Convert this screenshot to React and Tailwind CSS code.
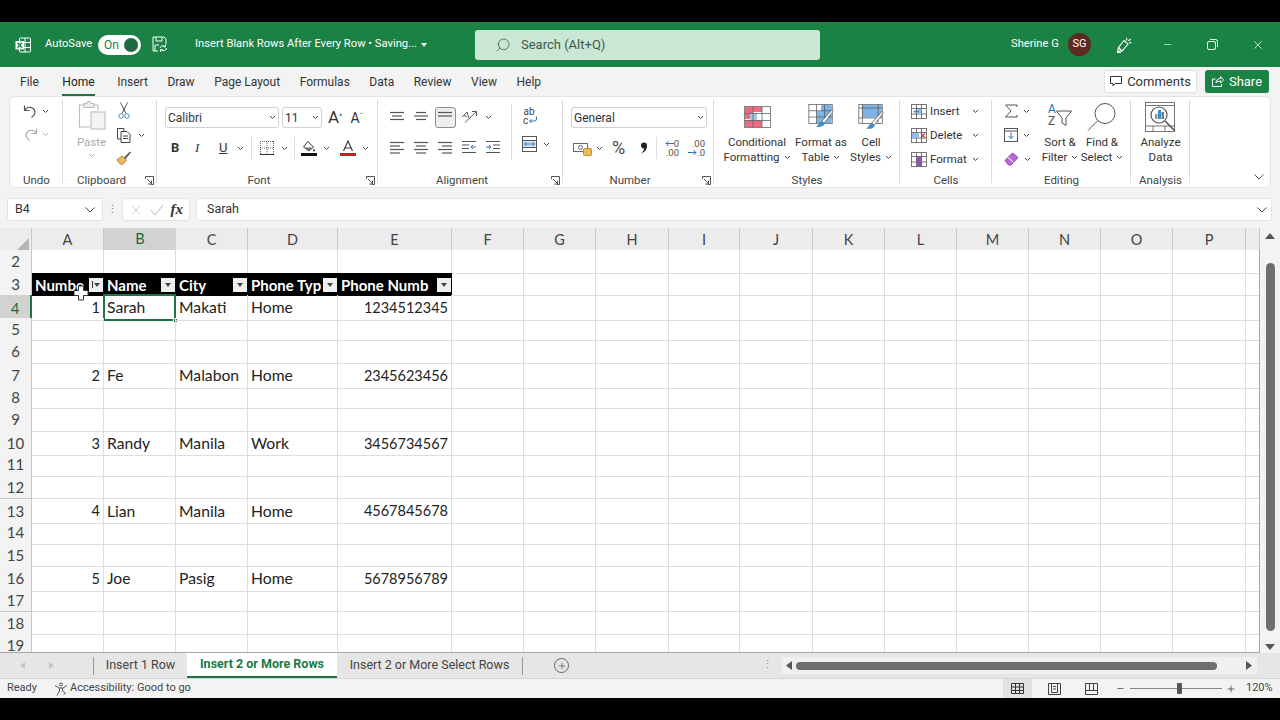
import React from "react";
import { Search, X, Minus, Plus } from "lucide-react";

const cols = ["A", "B", "C", "D", "E", "F", "G", "H", "I", "J", "K", "L", "M", "N", "O", "P", ""];
const gridCols =
  "grid grid-cols-[32px_72px_72px_72px_90px_114px_72px_72px_73px_71px_73px_72px_72px_72px_72px_72px_73px_14px]";

const table = {
  3: ["Numbe", "Name", "City", "Phone Typ", "Phone Numb"],
  4: ["1", "Sarah", "Makati", "Home", "1234512345"],
  7: ["2", "Fe", "Malabon", "Home", "2345623456"],
  10: ["3", "Randy", "Manila", "Work", "3456734567"],
  13: ["4", "Lian", "Manila", "Home", "4567845678"],
  16: ["5", "Joe", "Pasig", "Home", "5678956789"],
};
const rows = [2, 3, 4, 5, 6, 7, 8, 9, 10, 11, 12, 13, 14, 15, 16, 17, 18, 19];

function Chev({ className = "" }) {
  return (
    <svg width="7" height="5" viewBox="0 0 7 5" fill="none" stroke="#444" strokeWidth="1" className={className}>
      <path d="M1 1l2.5 2.5L6 1" />
    </svg>
  );
}

function Launcher() {
  return (
    <svg width="9" height="9" viewBox="0 0 9 9" fill="none" stroke="#555" strokeWidth="1">
      <path d="M.5 3V.5h8v8H6M2 3l4.5 4.5M3 8h3.5V4.500" />
    </svg>
  );
}

function Lines({ w = [14, 14, 14], stroke = "#555", right = false, center = false }) {
  return (
    <svg width="16" height="14" viewBox="0 0 16 14" stroke={stroke} strokeWidth="1.2">
      {w.map((l, i) => {
        const x = right ? 15 - l : center ? 8 - l / 2 : 1;
        return <path key={i} d={`M${x} ${2.500 + i * 3.500}h${l}`} />;
      })}
    </svg>
  );
}

function ExcelIcon() {
  return (
    <svg width="16" height="16" viewBox="0 0 16 16" fill="none">
      <rect x="4.500" y="1" width="11" height="14" rx="1" stroke="#fff" />
      <path d="M10 1v14M4.500 5.500h11M4.500 10.500h11" stroke="#fff" />
      <rect x="0.500" y="4" width="8.500" height="8.500" fill="#fff" />
      <path d="M2.500 5.800l4.400 5M6.900 5.800l-4.400 5" stroke="#1a8245" strokeWidth="1.300" />
    </svg>
  );
}

function SaveSync() {
  return (
    <svg width="16" height="17" viewBox="0 0 16 17" fill="none" stroke="#fff" strokeWidth="1">
      <path d="M6 15H1V1h11l2 2v5M4 1v4h6V1M3 15V9h4" />
      <path d="M8 12a3 3 0 015-1.500M14.500 12a3 3 0 01-5 2M13.500 8.500v2.300h-2.300M8.500 16v-2.300h2.300" />
    </svg>
  );
}

function PenSpark() {
  return (
    <svg width="16" height="16" viewBox="0 0 16 16" fill="none" stroke="#fff" strokeWidth="1.100">
      <path d="M1.500 14.500l1-4L8 3.500l4 3.500-5.500 6.500z" />
      <path d="M2.500 10.500l4 4M1 15.500h4" />
      <path d="M11 1l-.5 2.500M14.500 2L12.500 4M15.500 5.500L13 6" />
    </svg>
  );
}

function ScissorsIcon() {
  return (
    <svg width="12" height="18" viewBox="0 0 12 18" fill="none" stroke="#444" strokeWidth=".9">
      <path d="M2.500 .5L8 11.500M9.500 .5L4 11.500" />
      <circle cx="3" cy="14" r="2.300" stroke="#3f7fb8" />
      <circle cx="9" cy="14" r="2.300" stroke="#3f7fb8" />
    </svg>
  );
}

function UndoIcon({ flip, color = "#555" }) {
  return (
    <svg width="15" height="15" viewBox="0 0 15 15" fill="none" stroke={color} strokeWidth="1.200" className={flip ? "-scale-x-100" : ""}>
      <path d="M1.500 1.500v5h5M1.500 6.500C3 4 5 3 7.500 3.300c3.500.5 5.500 4 4 7-.6 1.300-1.600 2.300-3 3.200" />
    </svg>
  );
}

function PasteIcon() {
  return (
    <svg width="28" height="31" viewBox="0 0 28 31" fill="none" stroke="#bdbdbd" strokeWidth="1.100">
      <path d="M6 4H1.500v22H12M20 9V4h-4.500" />
      <path d="M6 2.500h3a2 2 0 014 0h3v4H6z" fill="#eee" />
      <rect x="13" y="11" width="14" height="17" fill="#f4f4f4" />
    </svg>
  );
}

function CopyIcon() {
  return (
    <svg width="16" height="16" viewBox="0 0 16 16" fill="none" stroke="#444" strokeWidth="1">
      <path d="M5 12H1.500V1.500H8V4" />
      <path d="M5 4.500h6l3 3v8H5zM7 9h5M7 11.500h5" />
    </svg>
  );
}

function BrushIcon() {
  return (
    <svg width="16" height="15" viewBox="0 0 16 15" fill="none">
      <path d="M1 9.500L6.500 6l4 4.500-4 4c-2.500-.2-4.500-2-5.500-5z" fill="#efb75e" stroke="#8a6a2a" strokeWidth=".7" />
      <path d="M8 7.500L14 1.500l1 1-5.500 6.500z" fill="#555" />
    </svg>
  );
}

function FillIcon() {
  return (
    <svg width="16" height="16" viewBox="0 0 16 16" fill="none">
      <path d="M7 1.500l5.500 5.500-4.500 4L2.500 7z" stroke="#333" strokeWidth="1" />
      <path d="M3 7.500h9l-4 3.500z" fill="#777" />
      <path d="M13 8.500l1 2a1 1 0 01-2 0z" fill="#333" />
      <rect x="0" y="13" width="16" height="3" fill="#111" />
    </svg>
  );
}

function FontColorIcon() {
  return (
    <svg width="16" height="16" viewBox="0 0 16 16" fill="none">
      <path d="M3.500 11L8 1l4.500 10M5 8h6" stroke="#333" strokeWidth="1.100" />
      <rect x="0" y="13" width="16" height="3" fill="#c81a24" />
    </svg>
  );
}

function BorderIcon() {
  return (
    <svg width="16" height="16" viewBox="0 0 16 16" fill="none" stroke="#666" strokeDasharray="1 1">
      <path d="M1 1.500h14M1 8h14M8 1v14M1.500 1v14M14.500 1v14" />
      <path d="M1 14.500h14" strokeDasharray="none" stroke="#333" />
    </svg>
  );
}

function OrientIcon() {
  return (
    <svg width="17" height="16" viewBox="0 0 17 16" fill="none" stroke="#555" strokeWidth="1">
      <path d="M1 8l5-5 2 6M2.500 6.500l3.500 1M4 13.500L15 3M11 2.500h4.500V7" stroke="#5a5a5a" />
    </svg>
  );
}

function IndentIcon({ flip }) {
  return (
    <svg width="16" height="14" viewBox="0 0 16 14" fill="none" stroke="#555" className={flip ? "-scale-x-100" : ""}>
      <path d="M1 1.500h14M8 5h7M8 8.500h7M1 12.500h14" />
      <path d="M1 7h5M4 5l2 2-2 2" stroke="#2f72b8" />
    </svg>
  );
}

function WrapIcon() {
  return (
    <svg width="16" height="19" viewBox="0 0 16 19" fill="none">
      <text x="1.500" y="8.500" fontSize="10" fill="#444" fontFamily="Roboto, sans-serif">ab</text>
      <text x="1" y="17.500" fontSize="10" fill="#444" fontFamily="Roboto, sans-serif">c</text>
      <path d="M14.500 10.500v2.500a2 2 0 01-2 2H7.500M9.500 13L7.500 15l2 2" stroke="#2f72b8" />
    </svg>
  );
}

function MergeIcon() {
  return (
    <svg width="15" height="16" viewBox="0 0 15 16" fill="none" stroke="#555">
      <rect x=".5" y=".5" width="14" height="15" />
      <path d="M.5 4.500h14M.5 11.500h14" />
      <rect x="1" y="5" width="13" height="6" fill="#cfe3f5" stroke="none" />
      <path d="M2.500 8h10M4.500 6l-2 2 2 2M10.500 6l2 2-2 2" stroke="#2f72b8" />
    </svg>
  );
}

function AccountingIcon() {
  return (
    <svg width="19" height="15" viewBox="0 0 19 15" fill="none" stroke="#666">
      <rect x=".5" y="2.500" width="14" height="8" />
      <circle cx="7.500" cy="6.500" r="2" />
      <rect x="10.500" y="7.500" width="8" height="7" rx="1" fill="#f0b95a" stroke="#c48a2c" />
    </svg>
  );
}

function CommaIcon() {
  return (
    <svg width="8" height="12" viewBox="0 0 8 12" fill="#222">
      <circle cx="4" cy="3.500" r="3" />
      <path d="M6.900 3.500C7.300 7 5 10 1.500 11.500 3.500 9 4 7.500 4 6z" />
    </svg>
  );
}

function DecimalIcon({ inc }) {
  const arrow = (
    <svg width="9" height="7" viewBox="0 0 9 7" fill="none" stroke="#2f72b8" className={inc ? "" : "-scale-x-100"}>
      <path d="M9 3.500H1M3.500 1L1 3.500 3.500 6" />
    </svg>
  );
  return (
    <div className="flex flex-col items-end w-[18px] text-[9.500px] leading-[9px] text-[#555]">
      {inc ? (
        <>
          <span className="flex items-center">{arrow}0</span>
          <span>.00</span>
        </>
      ) : (
        <>
          <span>.00</span>
          <span className="flex items-center">{arrow}.0</span>
        </>
      )}
    </div>
  );
}

function CondFormatIcon() {
  return (
    <svg width="27" height="22" viewBox="0 0 27 22" fill="none" stroke="#666" strokeWidth=".8">
      <rect x=".5" y=".5" width="26" height="21" fill="#fff" />
      <path d="M1 1h8v6H1zM9 1h9v5H9zM1 7h5v6H1zM1 14h17v7H1z" fill="#ec6d80" stroke="none" />
      <path d="M6 7h7v7H6z" fill="#a7c7e5" stroke="none" />
      <path d="M.5 7.500h26M.5 14.500h26M9 .5v21M18 .5v21" />
    </svg>
  );
}

function TableBrush() {
  return (
    <svg width="28" height="27" viewBox="0 0 28 30" fill="none" stroke="#555" strokeWidth=".8">
      <rect x=".5" y=".5" width="26" height="21" fill="#fff" />
      <path d="M14 1h12v7H14zM9 8h17v13H9z" fill="#7db4e6" stroke="none" />
      <path d="M.5 7.500h26M.5 14.500h26M9 .5v21M18 .5v21" />
      <path d="M26.500 6L15 19l2.500 2.500L27.500 8z" fill="#fff" />
      <path d="M15 19c-3 .5-3 4-6.500 6.500 5 .5 9-.5 9.500-4z" fill="#3f8fc9" stroke="none" />
    </svg>
  );
}

function CellStylesIcon() {
  return (
    <svg width="28" height="27" viewBox="0 0 28 30" fill="none" stroke="#555" strokeWidth=".8">
      <rect x=".5" y=".5" width="26" height="21" fill="#fff" />
      <path d="M4 1h22v14H4z" fill="#7db4e6" stroke="none" />
      <path d="M.5 4.500h26M.5 15.500h26M4.500 .5v21M22 .5v21" />
      <path d="M26.500 8L15 21l2.500 2.500L27.500 10z" fill="#fff" />
      <path d="M15 21c-3 .5-3 4-6.500 6.500 5 .5 9-.5 9.500-4z" fill="#3f8fc9" stroke="none" />
    </svg>
  );
}

function CellOpIcon({ kind }) {
  return (
    <svg width="16" height="15" viewBox="0 0 16 15" fill="none" stroke="#555" strokeWidth=".8">
      <rect x=".5" y=".5" width="15" height="14" fill="#fff" />
      <path d="M.5 4.500h15M.5 10h15M5.500 .5v14M10.500 .5v14" />
      {kind === "insert" && <path d="M6 5h4.500v5H6z" fill="#8fc1ea" stroke="none" />}
      {kind === "insert" && <path d="M8 7.500h-5M4.500 6l-1.500 1.500 1.500 1.500" stroke="#2f72b8" />}
      {kind === "delete" && <path d="M1 5h7v5H1z" fill="#8fc1ea" stroke="none" />}
      {kind === "delete" && <path d="M10 5l4 5M14 5l-4 5" stroke="#c8323c" strokeWidth="1.200" />}
      {kind === "format" && <path d="M5.500 5h5v9h-5z" fill="#8a5ab0" stroke="none" />}
    </svg>
  );
}

function SumFill({ kind }) {
  if (kind === "sum")
    return (
      <svg width="14" height="14" viewBox="0 0 14 14" fill="none" stroke="#555" strokeWidth="1">
        <path d="M13 3V1H1.500l5.500 6-5.500 6H13v-2" />
      </svg>
    );
  if (kind === "fill")
    return (
      <svg width="14" height="14" viewBox="0 0 14 14" fill="none" stroke="#555" strokeWidth="1">
        <rect x=".5" y=".5" width="13" height="13" />
        <path d="M.5 3h13" />
        <path d="M7 4.500v6M4.500 8L7 10.500 9.500 8" stroke="#2f72b8" />
      </svg>
    );
  return (
    <svg width="15" height="14" viewBox="0 0 15 14" fill="none">
      <path d="M1 8.500L8.500 1l5.500 4.500L7 13H4.500z" fill="#b56ad0" stroke="#9240b5" />
      <path d="M4 5.500l5.500 5" stroke="#fff" />
    </svg>
  );
}

function SortIcon() {
  return (
    <div className="flex items-center h-[30px]">
      <div className="flex flex-col text-[12px] leading-[12px] -mt-1">
        <span className="text-[#2f72b8]">A</span>
        <span className="text-[#555]">Z</span>
      </div>
      <svg width="16" height="16" viewBox="0 0 16 16" fill="none" stroke="#555" className="mt-0.5">
        <path d="M.5 1h15L10 8v7.500L6 13V8z" />
      </svg>
    </div>
  );
}

function FindIcon() {
  return (
    <svg width="30" height="30" viewBox="0 0 30 30" fill="none" stroke="#555" strokeWidth="1">
      <circle cx="18" cy="11.500" r="10" />
      <path d="M11 18.500L1 28.500" />
    </svg>
  );
}

function AnalyzeIcon() {
  return (
    <svg width="32" height="31" viewBox="0 0 32 31" fill="none" stroke="#555" strokeWidth=".8">
      <rect x=".5" y=".5" width="29" height="29" fill="#fff" />
      <path d="M.5 3.500h29M.5 24h29M8 24v6M20 24v6" />
      <circle cx="14" cy="13" r="8" strokeWidth="1.200" />
      <path d="M20 19l10 10" strokeWidth="1.600" />
      <path d="M10 12h2.500v5H10z" fill="#999" stroke="none" />
      <path d="M13 8h3v9h-3z" fill="#3f8fc9" stroke="none" />
      <path d="M16.500 10H19v7h-2.500z" fill="#777" stroke="none" />
    </svg>
  );
}

function BigButton({ icon, line1, line2, w }) {
  return (
    <div className={`flex flex-col items-center text-[11.500px] leading-[15px] text-[#333] whitespace-nowrap ${w}`}>
      <div className="h-[30px] flex items-center justify-center mb-[3px]">{icon}</div>
      <span>{line1}</span>
      <span className="flex items-center gap-1">
        {line2}
        <Chev />
      </span>
    </div>
  );
}

function Group({ width, label, launcher, children }) {
  return (
    <div className={`relative flex flex-col h-[87px] mt-[4px] ${width}`}>
      <div className="flex-1 min-h-0">{children}</div>
      <div className={`flex items-center justify-center h-[16px] pt-[1px] text-[11.500px] text-[#444] ${launcher ? "pr-[17px]" : ""}`}>
        {label}
      </div>
      <span className="absolute right-0 -top-[1px] h-[83px] w-px bg-[#dcdcdc]" />
      {launcher && (
        <span className="absolute right-[3px] bottom-[3px]">
          <Launcher />
        </span>
      )}
    </div>
  );
}

function ColumnHeaders() {
  return (
    <div className={`${gridCols} h-[22px] mt-[7px] bg-[#ececec] font-['Lato',sans-serif]`}>
      <div className="flex items-end justify-end pr-[2px] pb-[2px] border-r border-b border-[#c8c8c8]">
        <svg width="13" height="13" viewBox="0 0 13 13"><path d="M13 0v13H0z" fill="#b4b4b4" /></svg>
      </div>
      {cols.map((c, i) => (
        <div
          key={i}
          className={
            c === "B"
              ? "flex items-center justify-center pb-[2px] text-[14.500px] bg-[#d2d2d2] text-[#1d6b3d] border-b-2 border-[#217346]"
              : "flex items-center justify-center pb-[2px] text-[14.500px] text-[#444] border-r border-b border-[#c8c8c8]"
          }
        >
          {c}
        </div>
      ))}
    </div>
  );
}

function FilterBtn({ sorted }) {
  return (
    <span className="absolute right-[1px] top-[5px] w-[14px] h-[14px] bg-[#efefef] flex items-center justify-center">
      {sorted && <span className="w-px h-[7px] bg-[#333] mr-[1px]" />}
      <svg width="6" height="4" viewBox="0 0 6 4"><path d="M0 0h6L3 4z" fill="#444" /></svg>
    </span>
  );
}

function SheetRow({ n }) {
  const data = table[n];
  const isHeader = n === 3;
  const isActive = n === 4;
  return (
    <div className={`${gridCols} h-[22.6px]`}>
      <div
        className={
          isActive
            ? "flex items-center justify-center text-[15px] text-[#1d6b3d] bg-[#d2d2d2] border-r-2 border-[#217346]"
            : "flex items-center justify-center text-[15px] text-[#444] bg-[#f3f3f3] border-r border-b border-[#c8c8c8]"
        }
      >
        {n}
      </div>
      {cols.map((c, i) => {
        const val = data && data[i];
        const isNum = i === 0 || i === 4;
        if (isHeader && i < 5) {
          return (
            <div key={i} className="relative bg-black text-white font-bold text-[15px] pl-[3px] pt-[1px] flex items-center overflow-hidden whitespace-nowrap">
              {val}
              <FilterBtn sorted={i === 0} />
            </div>
          );
        }
        return (
          <div
            key={i}
            className={`relative flex items-center text-[#222] border-r border-b border-[#dedede] px-[3px] pt-[1px] ${
              isNum ? "justify-end text-[14.500px]" : "text-[15.700px]"
            }`}
          >
            {val}
            {isActive && i === 1 && (
              <>
                <span className="absolute -left-[1px] -top-[1px] -right-[1px] -bottom-[1px] border-2 border-[#217346]" />
                <span className="absolute -right-[3px] -bottom-[3px] w-[5px] h-[5px] bg-[#217346] border border-white" />
              </>
            )}
          </div>
        );
      })}
    </div>
  );
}

export default function App() {
  return (
    <div className="w-[1280px] h-[720px] overflow-hidden flex flex-col bg-black font-['Roboto',sans-serif]">
      <div className="h-[22px] shrink-0" />

      {/* title bar */}
      <div className="h-[45px] shrink-0 bg-[#1a8245] flex items-center text-white text-[11.200px]">
        <div className="ml-[15px]"><ExcelIcon /></div>
        <span className="ml-[14px] w-[53px]">AutoSave</span>
        <div className="w-[43px] h-[20px] rounded-full bg-white flex items-center justify-between pl-[6px] pr-[3px] text-[#1a8245] text-[12px]">
          On
          <span className="w-[14px] h-[14px] rounded-full bg-[#1a6b3d]" />
        </div>
        <div className="ml-[11px]"><SaveSync /></div>
        <span className="ml-[27px] w-[226px] whitespace-nowrap">Insert Blank Rows After Every Row • Saving...</span>
        <svg width="6" height="4" viewBox="0 0 6 4"><path d="M0 0h6L3 4z" fill="#fff" /></svg>
        <div className="ml-[48px] w-[345px] h-[30px] rounded-[3px] bg-[#c9e7d4] flex items-center pl-[20px] text-[#3f5a49] text-[13px]">
          <Search size={16} strokeWidth={1.200} className="-scale-x-100 mr-[10px]" />
          Search (Alt+Q)
        </div>
        <span className="ml-[191px] w-[57px] whitespace-nowrap">Sherine G</span>
        <span className="w-[23px] h-[23px] rounded-full bg-[#5c2a20] flex items-center justify-center text-[11px]">SG</span>
        <span className="ml-[25px]"><PenSpark /></span>
        <Minus size={11} strokeWidth={1.300} className="ml-[30px]" />
        <svg width="11" height="11" viewBox="0 0 11 11" fill="none" stroke="#fff" className="ml-[34px]">
          <rect x=".5" y="2.500" width="8" height="8" rx="1.500" />
          <path d="M3 .5h5.500a2 2 0 012 2V8" />
        </svg>
        <X size={14} strokeWidth={1.200} className="ml-[33px]" />
      </div>

      {/* tabs */}
      <div className="h-[29px] shrink-0 bg-[#f3f3f3] flex items-center text-[12px] text-[#333] relative">
        <div className="flex items-center gap-[19.500px] pl-[20px]">
          <span className="mr-[4px]">File</span>
          <span className="relative mr-[3px] text-[#222]">
            Home
            <span className="absolute left-0 right-0 -bottom-[5px] h-[2px] bg-[#217346]" />
          </span>
          <span>Insert</span>
          <span>Draw</span>
          <span>Page Layout</span>
          <span>Formulas</span>
          <span>Data</span>
          <span>Review</span>
          <span>View</span>
          <span>Help</span>
        </div>
        <div className="ml-auto flex items-center mr-[11px] gap-[8px]">
          <div className="w-[93px] h-[23px] rounded-[3px] bg-white border border-[#e0e0e0] flex items-center justify-center gap-[5px] text-[13px]">
            <svg width="12" height="11" viewBox="0 0 12 11" fill="none" stroke="#333"><path d="M.5.5h11v7H5L3 10V7.500H.5z" /></svg>
            Comments
          </div>
          <div className="w-[64px] h-[23px] rounded-[3px] bg-[#1a8245] text-white flex items-center justify-center gap-[5px] text-[13px]">
            <svg width="12" height="11" viewBox="0 0 12 11" fill="none" stroke="#fff"><path d="M3.500 3H.5v7.500h9V8M4 7c0-3 2-4.500 4.500-4.500V.5L11.500 4 8.500 7V5C6.500 5 5 5.500 4 7z" /></svg>
            Share
          </div>
        </div>
      </div>

      {/* ribbon */}
      <div className="h-[102px] shrink-0 bg-[#f3f3f3] pl-[9px] pr-[9px]">
        <div className="relative h-[92px] rounded-[6px] bg-white border border-[#e4e4e4] flex">
          <Group width="w-[53px]" label="Undo">
            <div className="flex flex-col gap-[8px] pt-[3px] pl-[12px]">
              <div className="flex items-center gap-[4px] pl-[1px]"><UndoIcon /><Chev /></div>
              <div className="flex items-center gap-[4px] pl-[1px]"><UndoIcon flip color="#aaa" /><Chev className="opacity-40" /></div>
            </div>
          </Group>
          <Group width="w-[94px]" label="Clipboard" launcher>
            <div className="flex pl-[15px]">
              <div className="flex flex-col items-center w-[27px] text-[11.500px] text-[#aaa] leading-[15px]">
                <PasteIcon />
                <span className="mt-[3px]">Paste</span>
                <Chev className="mt-[3px] opacity-40" />
              </div>
              <div className="flex flex-col ml-[11px] gap-[7px] pt-[1px]">
                <span className="pl-[2px]"><ScissorsIcon /></span>
                <div className="flex items-center gap-[6px] -mr-[14px]"><CopyIcon /><Chev /></div>
                <BrushIcon />
              </div>
            </div>
          </Group>
          <Group width="w-[221px]" label="Font" launcher>
            <div className="flex items-center pl-[8px] pt-[6px] h-[27px]">
              <div className="w-[114px] h-[21px] border border-[#d0d0d0] rounded-[3px] flex items-center justify-between px-[2px] text-[12px] text-[#333]">
                Calibri<Chev />
              </div>
              <div className="ml-[3px] w-[40px] h-[21px] border border-[#d0d0d0] rounded-[3px] flex items-center justify-between px-[2px] text-[12px] text-[#333]">
                11<Chev />
              </div>
              <span className="ml-[6px] text-[17px] text-[#333] leading-none">A<sup className="text-[8px]">^</sup></span>
              <span className="ml-[8px] text-[14px] text-[#333] leading-none">A<sup className="text-[8px]">ˇ</sup></span>
            </div>
            <div className="flex items-center pl-[14px] mt-[9px] h-[22px] text-[#333]">
              <span className="w-[24px] font-bold text-[13px]">B</span>
              <span className="w-[24px] italic text-[13px] font-['Liberation_Serif',serif]">I</span>
              <span className="w-[18px] underline text-[13px]">U</span>
              <Chev />
              <span className="w-px h-[22px] bg-[#dcdcdc] mx-[7px]" />
              <BorderIcon />
              <Chev className="ml-[6px]" />
              <span className="w-px h-[22px] bg-[#dcdcdc] mx-[6px]" />
              <FillIcon />
              <Chev className="ml-[6px]" />
              <span className="ml-[10px]"><FontColorIcon /></span>
              <Chev className="ml-[6px]" />
            </div>
          </Group>
          <Group width="w-[185px]" label="Alignment" launcher>
            <div className="flex h-full">
              <div className="flex flex-col pl-[11px] w-[134px] border-r border-[#dcdcdc] my-[3px] h-[56px]">
                <div className="flex items-center h-[26px] gap-[8px]">
                  <Lines w={[14, 10, 14]} center />
                  <Lines w={[10, 14, 10]} center />
                  <span className="w-[21px] h-[21px] -mx-[2.500px] border border-[#8f8f8f] rounded-[3px] bg-[#eee] flex items-center justify-center"><Lines w={[14, 14]} /></span>
                  <OrientIcon />
                  <Chev className="-ml-[1px]" />
                </div>
                <div className="flex items-center h-[30px] gap-[8px] pt-[3px]">
                  <Lines w={[14, 10, 14, 10]} />
                  <Lines w={[14, 10, 14, 10]} center />
                  <Lines w={[14, 10, 14, 10]} right />
                  <IndentIcon flip />
                  <IndentIcon />
                </div>
              </div>
              <div className="flex flex-col pl-[10px] pt-[5px]">
                <WrapIcon />
                <div className="flex items-center gap-[6px] mt-[11px]"><MergeIcon /><Chev /></div>
              </div>
            </div>
          </Group>
          <Group width="w-[151px]" label="Number" launcher>
            <div className="pl-[8px] pt-[6px]">
              <div className="w-[136px] h-[21px] border border-[#d0d0d0] rounded-[3px] flex items-center justify-between px-[2px] text-[12px] text-[#333]">
                General<Chev />
              </div>
            </div>
            <div className="flex items-center pl-[10px] mt-[9px] h-[22px]">
              <AccountingIcon />
              <Chev className="ml-[4px]" />
              <span className="ml-[9px] w-[17px] text-[18px] leading-none text-[#444]">%</span>
              <span className="ml-[11px]"><CommaIcon /></span>
              <span className="w-px h-[22px] bg-[#dcdcdc] ml-[8px] mr-[4px]" />
              <DecimalIcon inc />
              <span className="ml-[8px]"><DecimalIcon /></span>
            </div>
          </Group>
          <Group width="w-[186px]" label="Styles">
            <div className="flex pt-[1px]">
              <BigButton w="w-[86px]" icon={<CondFormatIcon />} line1="Conditional" line2="Formatting" />
              <BigButton w="w-[56px] -ml-[7px]" icon={<TableBrush />} line1="Format as" line2="Table" />
              <BigButton w="w-[44px]" icon={<CellStylesIcon />} line1="Cell" line2="Styles" />
            </div>
          </Group>
          <Group width="w-[92px]" label="Cells">
            <div className="flex flex-col pl-[11px] pt-[2px] gap-[7px] text-[11.500px] text-[#333] leading-[17px]">
              <div className="flex items-center gap-[3px]"><CellOpIcon kind="insert" /><span className="w-[39px]">Insert</span><Chev /></div>
              <div className="flex items-center gap-[3px]"><CellOpIcon kind="delete" /><span className="w-[39px]">Delete</span><Chev /></div>
              <div className="flex items-center gap-[3px]"><CellOpIcon kind="format" /><span className="w-[39px]">Format</span><Chev /></div>
            </div>
          </Group>
          <Group width="w-[139px]" label="Editing">
            <div className="flex">
              <div className="flex flex-col pl-[12px] pt-[3px] gap-[10px] w-[47px]">
                <div className="flex items-center gap-[5px]"><SumFill kind="sum" /><Chev /></div>
                <div className="flex items-center gap-[5px]"><SumFill kind="fill" /><Chev /></div>
                <div className="flex items-center gap-[5px]"><SumFill kind="clear" /><Chev /></div>
              </div>
              <BigButton w="w-[42px] pt-[1px]" icon={<SortIcon />} line1="Sort &" line2="Filter" />
              <BigButton w="w-[42px] pt-[1px]" icon={<FindIcon />} line1="Find &" line2="Select" />
            </div>
          </Group>
          <Group width="w-[59px]" label="Analysis">
            <div className="flex flex-col items-center text-[11.500px] leading-[15px] text-[#333] pt-[1px]">
              <div className="h-[30px] mb-[3px]"><AnalyzeIcon /></div>
              <span>Analyze</span>
              <span>Data</span>
            </div>
          </Group>
          <span className="absolute right-[6px] bottom-[7px]">
            <svg width="10" height="6" viewBox="0 0 10 6" fill="none" stroke="#555"><path d="M.5.5L5 5 9.500.5" /></svg>
          </span>
        </div>
      </div>

      {/* formula bar */}
      <div className="h-[23px] shrink-0 bg-[#f3f3f3] flex items-center text-[12.500px] text-[#333]">
        <div className="ml-[7px] w-[96px] h-[23px] bg-white rounded-[3px] border border-[#e4e4e4] flex items-center justify-between px-[7px]">
          B4
          <svg width="10" height="6" viewBox="0 0 10 6" fill="none" stroke="#444"><path d="M.5.5L5 5 9.500.5" /></svg>
        </div>
        <span className="w-[19px] text-center text-[#777] text-[11px] leading-none">⋮</span>
        <div className="w-[68px] h-[23px] bg-white rounded-[3px] border border-[#e4e4e4] flex items-center justify-between px-[6px]">
          <X size={14} strokeWidth={1} color="#aaa" />
          <svg width="14" height="12" viewBox="0 0 14 12" fill="none" stroke="#bbb"><path d="M1 6l4 5 8-10" /></svg>
          <span className="italic font-['Liberation_Serif',serif] text-[15px] font-bold leading-none">fx</span>
        </div>
        <div className="ml-[6px] flex-1 h-[23px] mr-[8px] bg-white rounded-[3px] border border-[#e4e4e4] flex items-center justify-between px-[10px] pr-[4px]">
          Sarah
          <svg width="10" height="6" viewBox="0 0 10 6" fill="none" stroke="#444"><path d="M.5.5L5 5 9.500.5" /></svg>
        </div>
      </div>

      {/* sheet */}
      <div className="flex-1 min-h-0 flex bg-[#f3f3f3]">
        <div className="w-[1260px] flex flex-col overflow-hidden">
          <ColumnHeaders />
          <div className="relative flex-1 min-h-0 overflow-hidden bg-white border-r border-b border-[#a8a8a8] font-['Lato',sans-serif]">
            {rows.map((n) => (
              <SheetRow key={n} n={n} />
            ))}
            <svg width="16" height="16" viewBox="0 0 16 16" className="absolute left-[73px] top-[35px]">
              <path d="M5.500 1h5v4.500H15v5h-4.500V15h-5v-4.500H1v-5h4.500z" fill="#fff" stroke="#333" />
            </svg>
          </div>
        </div>
        <div className="flex-1 flex flex-col items-center pt-[12px] pb-[3px]">
          <svg width="10" height="6" viewBox="0 0 10 6"><path d="M5 0l5 6H0z" fill="#555" /></svg>
          <div className="w-[9px] h-[368px] mt-[24px] rounded-full bg-[#6e6e6e]" />
          <svg width="10" height="6" viewBox="0 0 10 6" className="mt-auto"><path d="M0 0h10L5 6z" fill="#555" /></svg>
        </div>
      </div>

      {/* sheet tabs */}
      <div className="h-[25px] shrink-0 bg-[#e6e6e6] flex items-center text-[12.500px] text-[#444]">
        <div className="flex items-center w-[93px] pl-[20px] gap-[24px] text-[#c4c4c4]">
          <svg width="5" height="7" viewBox="0 0 5 7"><path d="M5 0v7L0 3.500z" fill="#c4c4c4" /></svg>
          <svg width="5" height="7" viewBox="0 0 5 7"><path d="M0 0v7l5-3.500z" fill="#c4c4c4" /></svg>
        </div>
        <span className="w-px h-[18px] bg-[#999]" />
        <span className="w-[93px] text-center">Insert 1 Row</span>
        <span className="w-[150px] h-full bg-white text-[#1a7a43] font-bold flex items-center justify-center border-b-2 border-[#217346]">Insert 2 or More Rows</span>
        <span className="w-[185px] text-center whitespace-nowrap">Insert 2 or More Select Rows</span>
        <span className="w-px h-[18px] bg-[#999]" />
        <span className="ml-[31px] w-[15px] h-[15px] rounded-full border border-[#666] flex items-center justify-center">
          <Plus size={10} strokeWidth={1.500} />
        </span>
        <span className="ml-[192px] w-[12px] text-center text-[#888] text-[11px]">⋮</span>
        <div className="ml-[9px] flex items-center w-[475px] h-[17px] bg-[#f0f0f0] pl-[4px] pr-[5px]">
          <svg width="6" height="9" viewBox="0 0 6 9"><path d="M6 0v9L0 4.500z" fill="#555" /></svg>
          <div className="ml-[4px] w-[421px] h-[8px] rounded-full bg-[#6e6e6e]" />
          <svg width="6" height="9" viewBox="0 0 6 9" className="ml-auto"><path d="M0 0v9l6-4.500z" fill="#555" /></svg>
        </div>
      </div>

      {/* status bar */}
      <div className="h-[20px] shrink-0 bg-[#f3f3f3] flex items-center text-[11px] text-[#444] border-t border-[#d4d4d4]">
        <span className="ml-[7px] w-[47px]">Ready</span>
        <svg width="14" height="14" viewBox="0 0 14 14" fill="none" stroke="#444" strokeWidth=".9">
          <circle cx="7" cy="2.500" r="1.500" />
          <path d="M1 3.500l4 2.500h4l4-2.500M5.500 6v3l-2.500 4.500M8.500 6v3l3 2-2 2" />
        </svg>
        <span className="ml-[2px]">Accessibility: Good to go</span>
        <div className="ml-auto flex items-center h-full">
          <span className="w-[29px] h-full bg-[#e2e2e2] flex items-center justify-center">
            <svg width="13" height="11" viewBox="0 0 13 11" fill="none" stroke="#333"><path d="M.5.5h12v10H.5zM.5 4h12M.5 7.500h12M4.500.5v10M8.500.5v10" /></svg>
          </span>
          <span className="w-[44px] flex justify-center">
            <svg width="13" height="12" viewBox="0 0 13 12" fill="none" stroke="#444"><path d="M.5.5h12v11H.5zM3.500.5v9h6V.5M5 3.500h3M5 6h3" /></svg>
          </span>
          <span className="w-[30px] flex justify-center">
            <svg width="13" height="12" viewBox="0 0 13 12" fill="none" stroke="#444"><path d="M.5.5h12v11H.5zM.5 7.500h12M4.500.5v7M8.500.5v7" /></svg>
          </span>
          <Minus size={9} className="ml-[10px]" />
          <div className="relative ml-[5px] w-[92px] h-px bg-[#888]">
            <span className="absolute left-[47px] -top-[5px] w-[5px] h-[11px] bg-[#555] rounded-[1px]" />
          </div>
          <Plus size={10} className="ml-[4px]" />
          <span className="ml-[10px] w-[34px]">120%</span>
        </div>
      </div>

      <div className="h-[22px] shrink-0" />
    </div>
  );
}
